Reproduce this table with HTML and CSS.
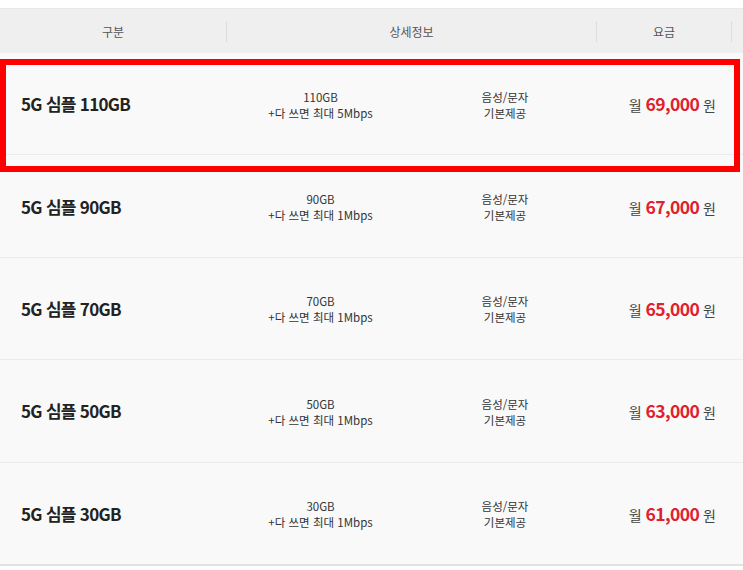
FILE: index.html
```html
<!DOCTYPE html>
<html lang="ko">
<head>
  <meta charset="UTF-8" />
  <meta name="viewport" content="width=device-width, initial-scale=1.0"/>
  <title>5G 심플 요금제</title>
  <link rel="stylesheet" href="styles.css">
</head>
<body>
  <div class="tabela">
    <div class="cabecalho">
      <div class="cab-col cab-nome">구분</div>
      <div class="cab-col cab-info">상세정보</div>
      <div class="cab-col cab-preco">요금</div>
      <div class="cab-fim"></div>
    </div>

    <div class="linha">
      <div class="nome">5G 심플 110GB</div>
      <div class="dados">110GB<br>+다 쓰면 최대 5Mbps</div>
      <div class="voz">음성/문자<br>기본제공</div>
      <div class="preco">월 <b>69,000</b> 원</div>
    </div>
    <div class="linha">
      <div class="nome">5G 심플 90GB</div>
      <div class="dados">90GB<br>+다 쓰면 최대 1Mbps</div>
      <div class="voz">음성/문자<br>기본제공</div>
      <div class="preco">월 <b>67,000</b> 원</div>
    </div>
    <div class="linha">
      <div class="nome">5G 심플 70GB</div>
      <div class="dados">70GB<br>+다 쓰면 최대 1Mbps</div>
      <div class="voz">음성/문자<br>기본제공</div>
      <div class="preco">월 <b>65,000</b> 원</div>
    </div>
    <div class="linha">
      <div class="nome">5G 심플 50GB</div>
      <div class="dados">50GB<br>+다 쓰면 최대 1Mbps</div>
      <div class="voz">음성/문자<br>기본제공</div>
      <div class="preco">월 <b>63,000</b> 원</div>
    </div>
    <div class="linha ultima">
      <div class="nome">5G 심플 30GB</div>
      <div class="dados">30GB<br>+다 쓰면 최대 1Mbps</div>
      <div class="voz">음성/문자<br>기본제공</div>
      <div class="preco">월 <b>61,000</b> 원</div>
    </div>

    <div class="destaque"></div>
  </div>
</body>
</html>
```

FILE: styles.css
```css
body {
  margin: 0;
  font-family: "Noto Sans CJK KR", "Noto Sans", sans-serif;
  background: #fff;
  color: #333;
}
.tabela {
  position: relative;
  padding-top: 8px;
}
.cabecalho {
  display: grid;
  grid-template-columns: 227px 370px 135px 1fr;
  align-items: center;
  height: 45px;
  background: #efefef;
  border-top: 1px solid #e8e8e8;
  box-sizing: border-box;
}
.cab-col {
  text-align: center;
  font-size: 12px;
  color: #555;
  border-right: 1px solid #dcdcdc;
  line-height: 20px;
  padding-top: 1px;
}
.cab-fim {
  height: 20px;
}
.linha {
  display: grid;
  grid-template-columns: 227px 183px 190px 1fr;
  align-items: center;
  height: 102.4px;
  background: #f9f9f9;
  border-bottom: 1px solid #ececec;
  box-sizing: border-box;
}
.linha.ultima {
  border-bottom: 2px solid #e2e2e2;
  height: 103.4px;
}
.nome {
  padding-left: 21px;
  font-size: 17px;
  font-weight: bold;
  color: #222;
  letter-spacing: -0.7px;
}
.dados, .voz {
  text-align: center;
  font-size: 11.5px;
  line-height: 16px;
  color: #333;
  padding-top: 2px;
}
.dados {
  padding-left: 4px;
}
.preco {
  text-align: right;
  padding-right: 27px;
  font-size: 14px;
  color: #444;
}
.preco b {
  font-size: 17.5px;
  color: #e0202e;
  letter-spacing: -0.6px;
}
.destaque {
  position: absolute;
  left: 0;
  top: 59px;
  width: 740px;
  height: 113px;
  border: 6px solid #ff0000;
  box-sizing: border-box;
}
```
